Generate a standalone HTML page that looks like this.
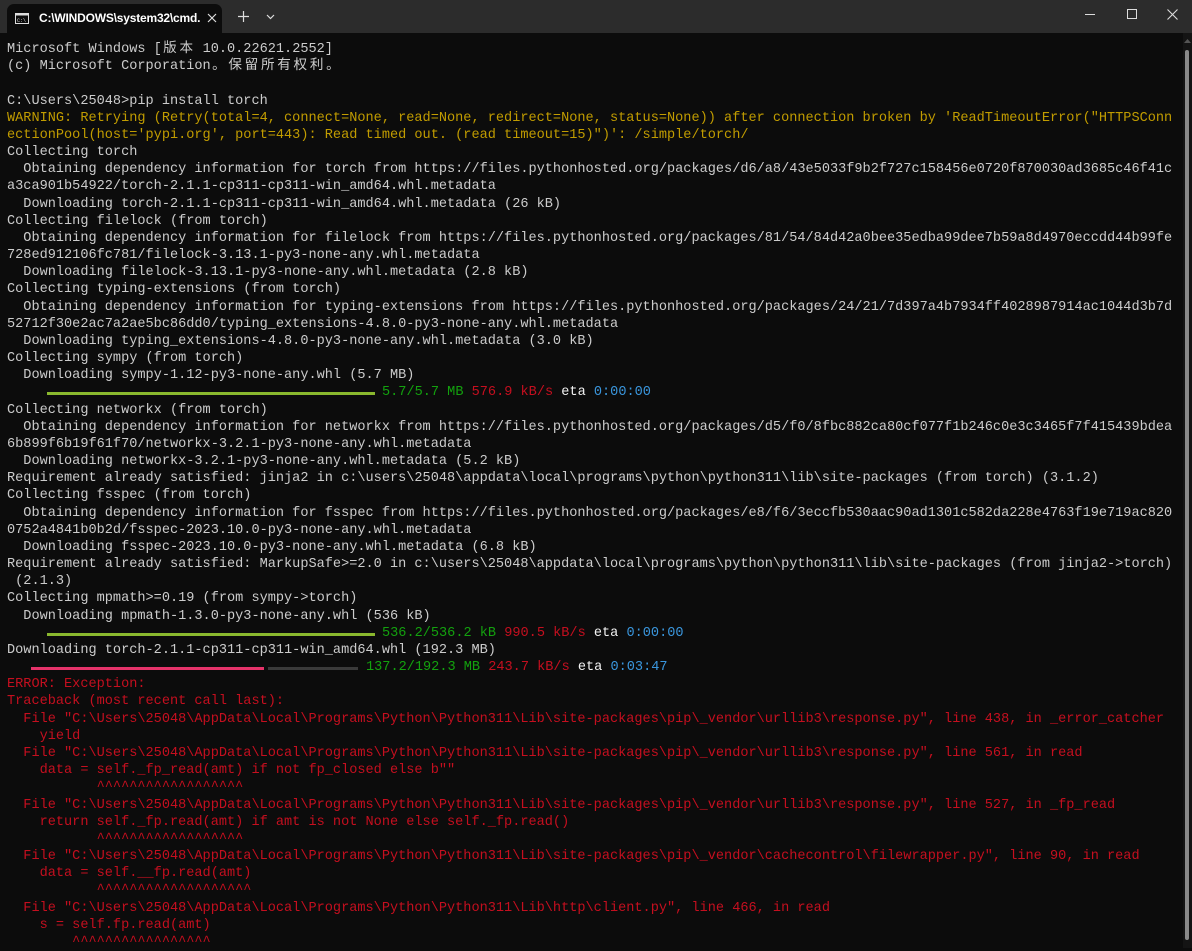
<!DOCTYPE html>
<html><head><meta charset="utf-8"><style>
html,body{margin:0;padding:0;width:1192px;height:948px;overflow:hidden;background:#0c0c0c;}
#tb{position:absolute;left:0;top:0;width:1192px;height:33px;background:#2c2c2c;}
#tab{position:absolute;left:7px;top:4px;width:215px;height:29px;background:#0c0c0c;border-radius:7px 7px 0 0;}
#tab .t{position:absolute;left:32px;top:7px;font:bold 12px "Liberation Sans",sans-serif;color:#fff;letter-spacing:-0.2px}
#term{position:absolute;left:7px;top:41px;margin:0;font-family:"Liberation Mono","Noto Sans CJK SC",monospace;font-size:13.58px;line-height:17.17px;color:#cccccc;white-space:pre;}
.c{display:inline-block;width:16.3px;text-align:center}
.y{color:#c19c00}.r{color:#c50f1f}.g{color:#13a10e}.b{color:#3a96dd}.w{color:#f2f2f2}
.pl{position:relative;height:17.17px}
.bar{position:absolute;top:8px;height:3px}
.pt{position:absolute;top:0}
</style></head><body>
<div id="tb">
 <div id="tab">
  <svg style="position:absolute;left:8px;top:9px" width="14" height="11" viewBox="0 0 14 11"><rect x="0.5" y="0.5" width="13" height="10" fill="none" stroke="#ddd"/><rect x="0.5" y="0.5" width="13" height="2" fill="#ddd"/><text x="2" y="9" font-size="5" fill="#ddd" font-family="Liberation Mono">C:\</text></svg>
  <div class="t">C:\WINDOWS\system32\cmd.</div>
  <svg style="position:absolute;left:200px;top:9px" width="10" height="10"><path d="M1 1L9 9M9 1L1 9" stroke="#ddd" stroke-width="1.2"/></svg>
 </div>
 <svg style="position:absolute;left:238px;top:11px" width="11" height="11"><path d="M5.5 0V11M0 5.5H11" stroke="#ddd" stroke-width="1.2"/></svg>
 <svg style="position:absolute;left:266px;top:14px" width="9" height="6"><path d="M1 1L4.5 4.5L8 1" stroke="#ddd" fill="none" stroke-width="1.2"/></svg>
 <div style="position:absolute;left:1085px;top:14px;width:10px;height:1px;background:#ddd"></div>
 <div style="position:absolute;left:1127px;top:9px;width:8px;height:8px;border:1px solid #ddd"></div>
 <svg style="position:absolute;left:1167px;top:9px" width="11" height="11"><path d="M0.5 0.5L10.5 10.5M10.5 0.5L0.5 10.5" stroke="#ddd" stroke-width="1.1"/></svg>
</div>
<div style="position:absolute;left:1183px;top:33px;width:9px;height:915px;background:#141414"></div>
<svg style="position:absolute;left:1183px;top:38px" width="9" height="6"><path d="M1 5L4.5 1L8 5Z" fill="#555"/></svg>
<div style="position:absolute;left:1185px;top:50px;width:4px;height:890px;background:#8a8a8a;border-radius:2px"></div>
<pre id="term">Microsoft Windows [<span class="c">版</span><span class="c">本</span> 10.0.22621.2552]
(c) Microsoft Corporation<span class="c">。</span><span class="c">保</span><span class="c">留</span><span class="c">所</span><span class="c">有</span><span class="c">权</span><span class="c">利</span><span class="c">。</span>

C:\Users\25048&gt;pip install torch
<span class="y">WARNING: Retrying (Retry(total=4, connect=None, read=None, redirect=None, status=None)) after connection broken by 'ReadTimeoutError("HTTPSConn
ectionPool(host='pypi.org', port=443): Read timed out. (read timeout=15)")': /simple/torch/</span>
Collecting torch
  Obtaining dependency information for torch from https://files.pythonhosted.org/packages/d6/a8/43e5033f9b2f727c158456e0720f870030ad3685c46f41c
a3ca901b54922/torch-2.1.1-cp311-cp311-win_amd64.whl.metadata
  Downloading torch-2.1.1-cp311-cp311-win_amd64.whl.metadata (26 kB)
Collecting filelock (from torch)
  Obtaining dependency information for filelock from https://files.pythonhosted.org/packages/81/54/84d42a0bee35edba99dee7b59a8d4970eccdd44b99fe
728ed912106fc781/filelock-3.13.1-py3-none-any.whl.metadata
  Downloading filelock-3.13.1-py3-none-any.whl.metadata (2.8 kB)
Collecting typing-extensions (from torch)
  Obtaining dependency information for typing-extensions from https://files.pythonhosted.org/packages/24/21/7d397a4b7934ff4028987914ac1044d3b7d
52712f30e2ac7a2ae5bc86dd0/typing_extensions-4.8.0-py3-none-any.whl.metadata
  Downloading typing_extensions-4.8.0-py3-none-any.whl.metadata (3.0 kB)
Collecting sympy (from torch)
  Downloading sympy-1.12-py3-none-any.whl (5.7 MB)
<div class="pl"><div class="bar" style="left:40px;width:328px;background:#8ab82e"></div><span class="pt" style="left:375px"><span class="g">5.7/5.7 MB</span> <span class="r">576.9 kB/s</span> <span class="w">eta</span> <span class="b">0:00:00</span></span></div>Collecting networkx (from torch)
  Obtaining dependency information for networkx from https://files.pythonhosted.org/packages/d5/f0/8fbc882ca80cf077f1b246c0e3c3465f7f415439bdea
6b899f6b19f61f70/networkx-3.2.1-py3-none-any.whl.metadata
  Downloading networkx-3.2.1-py3-none-any.whl.metadata (5.2 kB)
Requirement already satisfied: jinja2 in c:\users\25048\appdata\local\programs\python\python311\lib\site-packages (from torch) (3.1.2)
Collecting fsspec (from torch)
  Obtaining dependency information for fsspec from https://files.pythonhosted.org/packages/e8/f6/3eccfb530aac90ad1301c582da228e4763f19e719ac820
0752a4841b0b2d/fsspec-2023.10.0-py3-none-any.whl.metadata
  Downloading fsspec-2023.10.0-py3-none-any.whl.metadata (6.8 kB)
Requirement already satisfied: MarkupSafe&gt;=2.0 in c:\users\25048\appdata\local\programs\python\python311\lib\site-packages (from jinja2-&gt;torch)
 (2.1.3)
Collecting mpmath&gt;=0.19 (from sympy-&gt;torch)
  Downloading mpmath-1.3.0-py3-none-any.whl (536 kB)
<div class="pl"><div class="bar" style="left:40px;width:328px;background:#8ab82e"></div><span class="pt" style="left:375px"><span class="g">536.2/536.2 kB</span> <span class="r">990.5 kB/s</span> <span class="w">eta</span> <span class="b">0:00:00</span></span></div>Downloading torch-2.1.1-cp311-cp311-win_amd64.whl (192.3 MB)
<div class="pl"><div class="bar" style="left:24px;width:233px;background:#e5336a"></div><div class="bar" style="left:261px;width:90px;background:#3a3a3a"></div><span class="pt" style="left:359px"><span class="g">137.2/192.3 MB</span> <span class="r">243.7 kB/s</span> <span class="w">eta</span> <span class="b">0:03:47</span></span></div><span class="r">ERROR: Exception:
Traceback (most recent call last):
  File "C:\Users\25048\AppData\Local\Programs\Python\Python311\Lib\site-packages\pip\_vendor\urllib3\response.py", line 438, in _error_catcher
    yield
  File "C:\Users\25048\AppData\Local\Programs\Python\Python311\Lib\site-packages\pip\_vendor\urllib3\response.py", line 561, in read
    data = self._fp_read(amt) if not fp_closed else b""
           ^^^^^^^^^^^^^^^^^^
  File "C:\Users\25048\AppData\Local\Programs\Python\Python311\Lib\site-packages\pip\_vendor\urllib3\response.py", line 527, in _fp_read
    return self._fp.read(amt) if amt is not None else self._fp.read()
           ^^^^^^^^^^^^^^^^^^
  File "C:\Users\25048\AppData\Local\Programs\Python\Python311\Lib\site-packages\pip\_vendor\cachecontrol\filewrapper.py", line 90, in read
    data = self.__fp.read(amt)
           ^^^^^^^^^^^^^^^^^^^
  File "C:\Users\25048\AppData\Local\Programs\Python\Python311\Lib\http\client.py", line 466, in read
    s = self.fp.read(amt)
        ^^^^^^^^^^^^^^^^^</span></pre>
</body></html>
